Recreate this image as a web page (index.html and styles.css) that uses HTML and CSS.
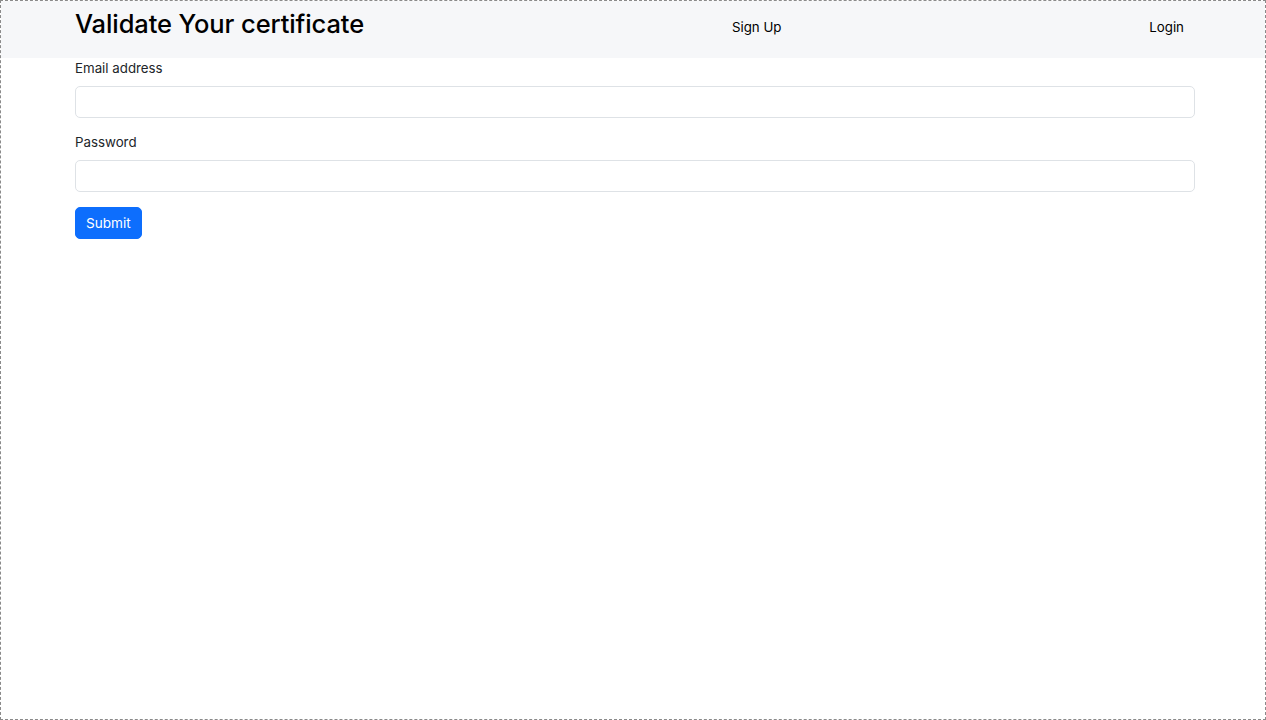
FILE: index.html
```html
<!DOCTYPE html>
<html lang="en">
<head>
<meta charset="utf-8">
<title>Validate Your certificate</title>
<link rel="stylesheet" href="styles.css">
</head>
<body>
<div class="frame">
  <nav class="navbar">
    <div class="container nav-inner">
      <a class="brand" href="#">Validate Your certificate</a>
      <a class="nav-link signup" href="#">Sign Up</a>
      <a class="nav-link login" href="#">Login</a>
    </div>
  </nav>
  <main class="container">
    <form class="form">
      <div class="field">
        <label class="label" for="email">Email address</label>
        <input class="input" id="email" type="email">
      </div>
      <div class="field">
        <label class="label" for="pw">Password</label>
        <input class="input" id="pw" type="password">
      </div>
      <button class="btn" type="submit">Submit</button>
    </form>
  </main>
</div>
</body>
</html>
```
FILE: styles.css
```css
* { box-sizing: border-box; }
html, body { margin: 0; padding: 0; }
body {
  font-family: Inter, "Liberation Sans", sans-serif;
  font-size: 13.3px;
  color: #212529;
  background: #fff;
}
.frame {
  min-height: 720px;
  border: 1px dashed #8a8a8a;
}
.container {
  width: 1120px;
  margin-left: 74px;
}
.navbar {
  background: #f6f7f9;
  height: 57px;
}
.nav-inner {
  display: flex;
  justify-content: space-between;
  align-items: flex-start;
  padding-top: 6px;
}
.brand {
  font-size: 25.5px;
  font-weight: 500;
  line-height: 34px;
  color: #000;
  text-decoration: none;
  letter-spacing: -0.1px;
}
.nav-link {
  font-size: 13.3px;
  line-height: 20px;
  margin-top: 10px;
  color: #000;
  text-decoration: none;
}
.login { padding-right: 11px; }
.form {
  display: flex;
  flex-direction: column;
  align-items: flex-start;
}
.field {
  width: 100%;
  margin-bottom: 14px;
}
.label {
  display: block;
  line-height: 20px;
  margin-bottom: 8px;
}
.input {
  display: block;
  width: 100%;
  height: 32px;
  border: 1px solid #dee2e6;
  border-radius: 5px;
  background: #fff;
  font: inherit;
  padding: 0 10px;
}
.btn {
  margin-top: 1px;
  height: 32px;
  padding: 0 10px;
  background: #0d6efd;
  color: #fff;
  border: 1px solid #0d6efd;
  border-radius: 5px;
  font: inherit;
  font-size: 13.6px;
}
```
